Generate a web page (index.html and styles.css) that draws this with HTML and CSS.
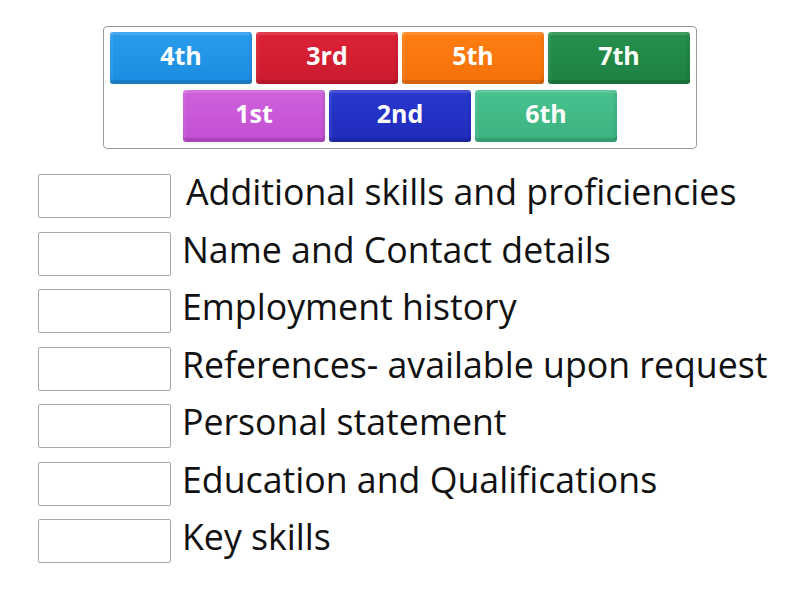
FILE: index.html
```html
<!DOCTYPE html>
<html lang="en">
<head>
  <meta charset="UTF-8" />
  <title>CV order</title>
  <link rel="stylesheet" href="styles.css">
</head>
<body>

  <div class="bank">
    <div class="tile blue">4th</div>
    <div class="tile red">3rd</div>
    <div class="tile orange">5th</div>
    <div class="tile green">7th</div>
    <div class="tile pink">1st</div>
    <div class="tile navy">2nd</div>
    <div class="tile mint">6th</div>
  </div>

  <ul class="slots">
    <li><span class="box"></span><span class="label first">Additional skills and proficiencies</span></li>
    <li><span class="box"></span><span class="label">Name and Contact details</span></li>
    <li><span class="box"></span><span class="label">Employment history</span></li>
    <li><span class="box"></span><span class="label">References- available upon request</span></li>
    <li><span class="box"></span><span class="label">Personal statement</span></li>
    <li><span class="box"></span><span class="label">Education and Qualifications</span></li>
    <li><span class="box"></span><span class="label">Key skills</span></li>
  </ul>

</body>
</html>
```

FILE: styles.css
```css
body {
  margin: 0;
  font-family: "Open Sans", "Liberation Sans", sans-serif;
  color: #111;
  background: #fff;
}

.bank {
  width: 594px;
  box-sizing: border-box;
  margin: 26px auto 0;
  padding: 5px 0 6px;
  border: 1px solid #9a9a9a;
  border-radius: 4px;
  display: flex;
  flex-wrap: wrap;
  justify-content: center;
  gap: 6px 4px;
}
.tile {
  width: 142px;
  height: 52px;
  box-sizing: border-box;
  border-radius: 3px;
  color: #fff;
  font-weight: 700;
  font-size: 25px;
  line-height: 47px;
  text-align: center;
  box-shadow: inset 0 -4px 0 rgba(0, 0, 0, 0.12), inset 0 3px 0 rgba(255, 255, 255, 0.12), inset 3px 0 0 rgba(255, 255, 255, 0.06), inset -3px 0 0 rgba(0, 0, 0, 0.05);
}
.blue   { background: linear-gradient(#2a9cec, #1b8de0); }
.red    { background: linear-gradient(#dc2236, #cc1a2e); }
.orange { background: linear-gradient(#ff7f14, #f57008); }
.green  { background: linear-gradient(#26904d, #1d8042); }
.pink   { background: linear-gradient(#cf62dc, #c24fd3); }
.navy   { background: linear-gradient(#2a38cf, #1f2bbb); }
.mint   { background: linear-gradient(#47c28e, #3cb380); }

.slots {
  list-style: none;
  margin: 25px 0 0;
  padding: 0 0 0 38px;
}
.slots li {
  display: flex;
  align-items: flex-start;
  height: 44px;
  margin-bottom: 13.5px;
}
.box {
  width: 133px;
  height: 44px;
  box-sizing: border-box;
  border: 1px solid #a8a8a8;
  border-radius: 2px;
  flex: none;
}
.label {
  margin-left: 11px;
  font-size: 35.7px;
  line-height: 34px;
  white-space: nowrap;
}
.label.first {
  margin-left: 15px;
}
```
